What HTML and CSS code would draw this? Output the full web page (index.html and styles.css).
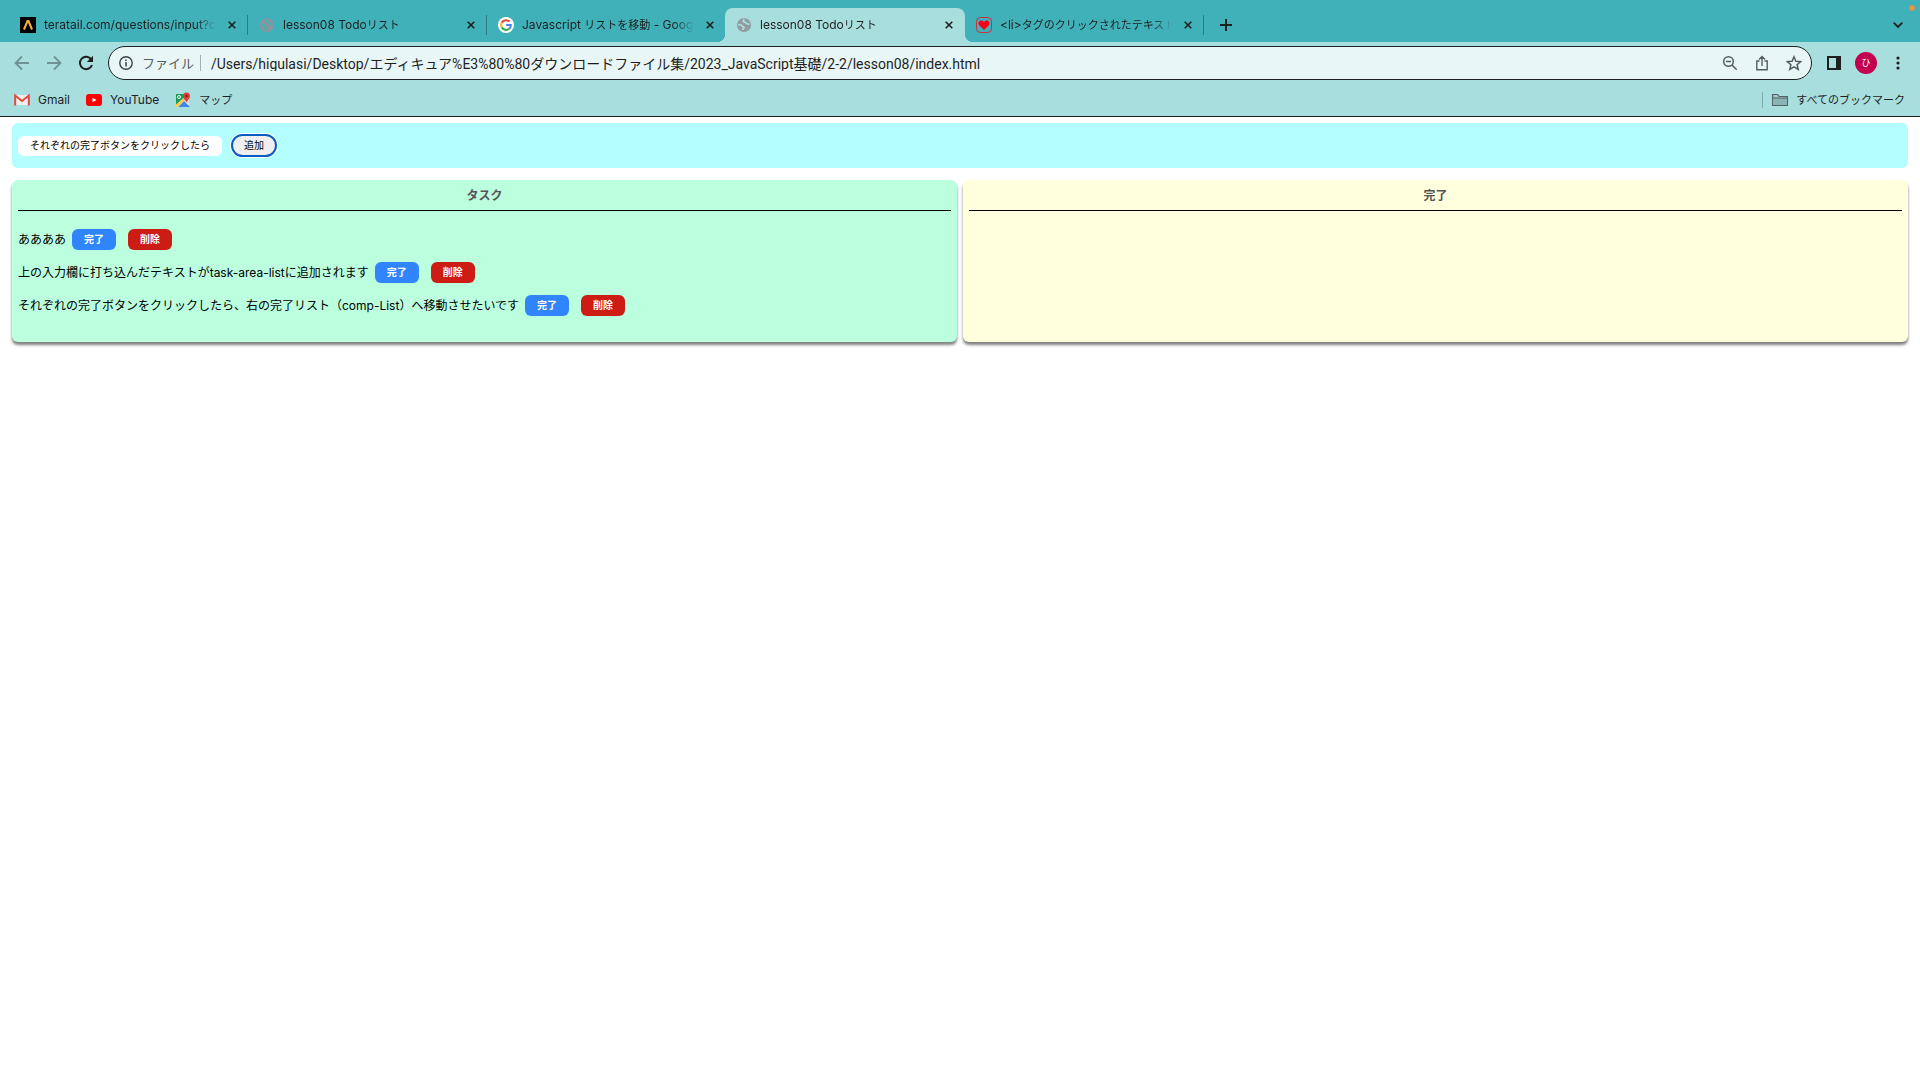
FILE: index.html
```html
<!DOCTYPE html>
<html lang="ja">
  <head>
    <meta charset="UTF-8" />
    <meta name="viewport" content="width=device-width, initial-scale=1.0" />
    <title>lesson08 Todoリスト</title>
    <link rel="stylesheet" href="styles.css">
  </head>
  <body>
    <header class="browser">
      <div class="tab-strip">
        <div class="tab">
          <svg class="favicon" viewBox="0 0 16 16"><rect width="16" height="16" fill="#000"/><path d="M4 12.500L7.500 4h1L12 12.500" fill="none" stroke="#f9b233" stroke-width="2"/></svg>
          <span class="tab-title">teratail.com/questions/input?c</span>
          <button class="close" aria-label="閉じる"><svg viewBox="0 0 8 8"><path d="M.7.7l6.600 6.600M7.300.7L.7 7.300"/></svg></button>
        </div>
        <div class="tab">
          <svg class="favicon" viewBox="0 0 16 16"><circle cx="8" cy="8" r="7" fill="#8b959d"/><path d="M2.200 7.800c1.500-.3 3.300 0 3.800 1s2 .5 2 1.600-1.200 1.200-1.200 2.700M8.500 2.200C7.500 3 6.800 3.600 7.400 4.600s2 .2 2.500 1.200 1.600 1.400 3.600 1.200" fill="none" stroke="#41b1b9" stroke-width="1.800"/></svg>
          <span class="tab-title">lesson08 Todo<span class="kana">リスト</span></span>
          <button class="close" aria-label="閉じる"><svg viewBox="0 0 8 8"><path d="M.7.7l6.600 6.600M7.300.7L.7 7.300"/></svg></button>
        </div>
        <div class="tab no-line">
          <svg class="favicon" viewBox="0 0 16 16"><circle cx="8" cy="8" r="8" fill="#fff"/><g fill="none" stroke-width="2"><path d="M11.500 4.600A4.900 4.900 0 0 0 3.700 5.800" stroke="#ea4335"/><path d="M3.700 5.800a4.900 4.900 0 0 0 0 4.500" stroke="#fbbc05"/><path d="M3.700 10.300a4.900 4.900 0 0 0 7.500 1.400" stroke="#34a853"/><path d="M11.200 11.700A4.800 4.800 0 0 0 12.800 8H8.200" stroke="#4285f4"/></g></svg>
          <span class="tab-title">Javascript <span class="kana">リストを移動</span> - Goog</span>
          <button class="close" aria-label="閉じる"><svg viewBox="0 0 8 8"><path d="M.7.7l6.600 6.600M7.300.7L.7 7.300"/></svg></button>
        </div>
        <div class="tab active">
          <svg class="favicon" viewBox="0 0 16 16"><circle cx="8" cy="8" r="7" fill="#919ba0"/><path d="M2.200 7.800c1.500-.3 3.300 0 3.800 1s2 .5 2 1.600-1.200 1.200-1.200 2.700M8.500 2.200C7.500 3 6.800 3.600 7.400 4.600s2 .2 2.500 1.200 1.600 1.400 3.600 1.200" fill="none" stroke="#a8dedd" stroke-width="1.800"/></svg>
          <span class="tab-title">lesson08 Todo<span class="kana">リスト</span></span>
          <button class="close" aria-label="閉じる"><svg viewBox="0 0 8 8"><path d="M.7.7l6.600 6.600M7.300.7L.7 7.300"/></svg></button>
        </div>
        <div class="tab">
          <svg class="favicon" viewBox="0 0 16 16"><rect x=".5" y=".5" width="15" height="15" rx="4" fill="none" stroke="#d5283b"/><path d="M8 13L3.600 8.700C1.200 6.200 3 3.500 5.200 3.500c1.300 0 2.200.6 2.800 1.600.6-1 1.500-1.600 2.800-1.600 2.200 0 4 2.700 1.600 5.200z" fill="#fb0019"/></svg>
          <span class="tab-title">&lt;li&gt;<span class="kana">タグのクリックされたテキスト</span></span>
          <button class="close" aria-label="閉じる"><svg viewBox="0 0 8 8"><path d="M.7.7l6.600 6.600M7.300.7L.7 7.300"/></svg></button>
        </div>
        <button class="new-tab" aria-label="新しいタブ"><svg width="12" height="12" viewBox="0 0 12 12"><path d="M6 0v12M0 6h12" stroke="#1f1f1f" stroke-width="2"/></svg></button>
        <button class="tab-search" aria-label="タブを検索"><svg width="10" height="6" viewBox="0 0 10 6"><path d="M.7.7L5 5 9.300.7" fill="none" stroke="#1f1f1f" stroke-width="1.800"/></svg></button>
        <span class="rec-dot"></span>
      </div>

      <div class="toolbar">
        <button class="nav" aria-label="戻る"><svg viewBox="0 0 16 16"><path d="M15 8H2M8 1.500L1.500 8 8 14.500" fill="none" stroke="#6f9294" stroke-width="1.800"/></svg></button>
        <button class="nav" aria-label="進む"><svg viewBox="0 0 16 16"><path d="M1 8h13M8 1.500L14.500 8 8 14.500" fill="none" stroke="#6f9294" stroke-width="1.800"/></svg></button>
        <button class="nav" aria-label="再読み込み"><svg viewBox="0 0 16 16"><path d="M13.300 4.500A6.200 6.200 0 1 0 14 10" fill="none" stroke="#1f1f1f" stroke-width="2"/><path d="M15 .8v6.200H8.800z" fill="#1f1f1f"/></svg></button>
        <div class="omnibox">
          <svg class="info" viewBox="0 0 14 14"><circle cx="7" cy="7" r="6.200" fill="none" stroke="#3c4243" stroke-width="1.400"/><path d="M7 6v4.500M7 3.400v1.500" stroke="#3c4243" stroke-width="1.500"/></svg>
          <label class="scheme" for="url">ファイル</label>
          <input class="url" id="url" type="text" value="/Users/higulasi/Desktop/エディキュア%E3%80%80ダウンロードファイル集/2023_JavaScript基礎/2-2/lesson08/index.html">
          <button class="action" aria-label="ズーム"><svg viewBox="0 0 16 16"><g fill="none" stroke="#555d5e" stroke-width="1.500"><circle cx="6.500" cy="6.500" r="4.800"/><path d="M10 10l4.700 4.700M4 6.500h5"/></g></svg></button>
          <button class="action" aria-label="共有"><svg viewBox="0 0 16 16"><path d="M5.500 6H2.800v8.800h10.400V6h-2.700M8 11V2M5 4.500L8 1.500l3 3" fill="none" stroke="#555d5e" stroke-width="1.400"/></svg></button>
          <button class="action" aria-label="ブックマーク"><svg viewBox="0 0 16 16"><path d="M8 1.800l1.900 4.400 4.800.4-3.600 3.100 1.100 4.700L8 11.900l-4.200 2.500 1.100-4.700-3.600-3.100 4.800-.4z" fill="none" stroke="#555d5e" stroke-width="1.500"/></svg></button>
        </div>
        <button class="side-panel" aria-label="サイドパネル"><svg width="14" height="14" viewBox="0 0 14 14"><path d="M1 1h12v12H1z" fill="none" stroke="#1f1f1f" stroke-width="2"/><path d="M9 0h5v14H9z" fill="#1f1f1f"/></svg></button>
        <button class="avatar">ひ</button>
        <button class="more" aria-label="メニュー"><svg width="4" height="14" viewBox="0 0 4 14"><g fill="#1f1f1f"><circle cx="2" cy="2" r="1.600"/><circle cx="2" cy="7" r="1.600"/><circle cx="2" cy="12" r="1.600"/></g></svg></button>
      </div>

      <nav class="bookmarks">
        <a href="#"><svg viewBox="0 0 16 16"><path d="M2 3h12v10H2z" fill="#f0eeee"/><path d="M1.200 13.500V3.500L8 9l6.800-5.500v10" fill="none" stroke="#dc4a42" stroke-width="2"/></svg>Gmail</a>
        <a href="#"><svg viewBox="0 0 16 16"><rect y="2" width="16" height="12" rx="3" fill="#f00"/><path d="M6.500 5.700v4.600l4-2.300z" fill="#fff"/></svg>YouTube</a>
        <a href="#"><svg viewBox="0 0 16 16"><path d="M1 2h13v13H1z" fill="#dfe5e6"/><path d="M1 2h9v5L1 15z" fill="#1c9c5b"/><path d="M3 15l6-6 6 6z" fill="#3d86f5"/><path d="M1 15v-2.500L9.500 5l1.500 1.800L3 15z" fill="#fbd04b"/><circle cx="4" cy="5" r="1.500" fill="none" stroke="#fff"/><path d="M11.500 10.500C10.500 8 8 6.500 8 4a3.500 3.500 0 0 1 7 0c0 2.500-2.500 4-3.500 6.500z" fill="#df3d38"/><circle cx="11.500" cy="4" r="1.200" fill="#8b1d18"/></svg><span class="kana">マップ</span></a>
        <a href="#" class="all-bookmarks"><svg viewBox="0 0 16 16"><path d="M.6 13.500v-11h5l1.500 2h8.300v9z" fill="#a8c6c6" stroke="#4f6465" stroke-width="1.200"/><path d="M1.200 6h13.600v7H1.200z" fill="#8bb3b4"/><path d="M.6 6h14.800" stroke="#4f6465"/></svg><span class="kana">すべてのブックマーク</span></a>
      </nav>
    </header>

    <main class="container">
      <form class="add-area">
        <input class="task-input" type="text" aria-label="タスク" value="それぞれの完了ボタンをクリックしたら">
        <button class="add-btn" type="button">追加</button>
      </form>

      <div class="areas">
        <section class="area task-area">
          <h2>タスク</h2>
          <ul class="task-area-list">
            <li><span>ああああ</span><button class="comp-btn">完了</button><button class="del-btn">削除</button></li>
            <li><span>上の入力欄に打ち込んだテキストがtask-area-listに追加されます</span><button class="comp-btn">完了</button><button class="del-btn">削除</button></li>
            <li><span>それぞれの完了ボタンをクリックしたら、右の完了リスト（comp-List）へ移動させたいです</span><button class="comp-btn">完了</button><button class="del-btn">削除</button></li>
          </ul>
        </section>
        <section class="area comp-area">
          <h2>完了</h2>
          <ul class="comp-list"></ul>
        </section>
      </div>
    </main>
  </body>
</html>
```

FILE: styles.css
```css
* {
  box-sizing: border-box;
}
body {
  margin: 0;
  background: #fff;
  font-family: Inter, "Noto Sans CJK JP", sans-serif;
  font-size: 12px;
  color: #000;
}
button {
  border: none;
  padding: 0;
  background: none;
  font-family: inherit;
  cursor: pointer;
}
svg {
  display: block;
  flex-shrink: 0;
}

/* browser */
.browser {
  background: #a8dedd;
  border-bottom: 1px solid #1f1f1f;
  color: #1f1f1f;
}
.kana {
  font-size: 11px;
}
.tab-strip {
  position: relative;
  display: flex;
  align-items: flex-end;
  height: 42px;
  padding: 0 17px 0 9px;
  background: #41b1b9;
}
.tab {
  position: relative;
  display: flex;
  align-items: center;
  width: 239px;
  height: 34px;
  padding: 0 12px 0 11px;
}
.tab:not(.active):not(.no-line) {
  background: linear-gradient(#2a7c82, #2a7c82) right 7px / 1px 20px no-repeat;
}
.favicon {
  width: 16px;
  height: 16px;
}
.tab-title {
  flex: 1;
  margin: 0 12px 0 8px;
  line-height: 20px;
  white-space: nowrap;
  overflow: hidden;
  mask-image: linear-gradient(to left, transparent, #000 20px);
}
.close {
  width: 8px;
  height: 8px;
}
.close path {
  fill: none;
  stroke: #1f1f1f;
  stroke-width: 1.6;
}
.tab.active {
  width: 240px;
  margin-left: -1px;
  background: #a8dedd;
  border-radius: 8px 8px 0 0;
}
.active::before,
.active::after {
  content: "";
  position: absolute;
  bottom: 0;
  width: 8px;
  height: 8px;
}
.active::before {
  left: -8px;
  background: radial-gradient(circle at 0 0, #41b1b9 8px, #a8dedd 8px);
}
.active::after {
  right: -8px;
  background: radial-gradient(circle at 100% 0, #41b1b9 8px, #a8dedd 8px);
}
.new-tab {
  display: flex;
  align-items: center;
  height: 34px;
  margin-left: 16px;
}
.tab-search {
  display: flex;
  align-items: center;
  height: 34px;
  margin-left: auto;
}
.rec-dot {
  position: absolute;
  top: 5px;
  right: 5px;
  width: 6px;
  height: 6px;
  border-radius: 50%;
  background: #e0954a;
}

.toolbar {
  display: flex;
  align-items: center;
  padding: 4px 20px 4px 14px;
}
.nav {
  width: 16px;
  margin-right: 16px;
}
.nav svg,
.action svg {
  width: 16px;
  height: 16px;
}
.omnibox {
  flex: 1;
  display: flex;
  align-items: center;
  gap: 16px;
  height: 34px;
  margin-right: 15px;
  margin-left: -2px;
  padding: 0 9px 0 10px;
  border: 1px solid #1f1f1f;
  border-radius: 17px;
  background: #e8f6f6;
}
.info {
  width: 14px;
  height: 14px;
}
.scheme {
  margin-left: -7px;
  padding-right: 6px;
  border-right: 1px solid #a3b3b4;
  font-size: 13px;
  line-height: 16px;
  color: #555d5e;
}
.url {
  flex: 1;
  min-width: 0;
  margin-left: -6px;
  padding: 0;
  border: none;
  outline: none;
  background: none;
  font-family: Roboto, "Noto Sans CJK JP", sans-serif;
  font-size: 14px;
  color: #1f1f1f;
}
.action {
  width: 16px;
}
.avatar {
  width: 22px;
  height: 22px;
  margin: 0 19px 0 14px;
  border-radius: 50%;
  background: #c2004f;
  color: #fff;
  font-size: 9px;
  line-height: 22px;
}

.bookmarks {
  display: flex;
  align-items: center;
  gap: 16px;
  height: 32px;
  padding: 0 15px 0 14px;
}
.bookmarks a {
  display: flex;
  align-items: center;
  gap: 8px;
  line-height: 16px;
  color: #1f1f1f;
  text-decoration: none;
}
.bookmarks svg {
  width: 16px;
  height: 16px;
}
.bookmarks .all-bookmarks {
  margin-left: auto;
  padding-left: 9px;
  border-left: 1px solid #7fa9aa;
}

/* todo page */
.container {
  padding: 6px 12px;
}
.add-area {
  display: flex;
  align-items: flex-start;
  gap: 9px;
  height: 45px;
  padding: 11px 6px;
  border-radius: 6px;
  background: #b3ffff;
}
.task-input {
  width: 204px;
  height: 20px;
  margin-top: 2px;
  padding: 0 12px 3px;
  border: none;
  border-radius: 6px;
  background: #fff;
  font-family: inherit;
  font-size: 10px;
  color: #000;
}
.add-btn {
  width: 46px;
  height: 23px;
  border: 2px solid #0a5cc4;
  border-radius: 12px;
  box-shadow: 0 0 0 1px #fff;
  background: #efefef;
  font-size: 10px;
  line-height: 19px;
  color: #000;
}
.areas {
  display: flex;
  gap: 6px;
  margin-top: 12px;
}
.area {
  flex: 1;
  padding: 6px;
  border-radius: 6px;
  box-shadow: 0 3px 3px rgba(0, 0, 0, 0.5);
}
.task-area {
  background: #bbffdf;
}
.comp-area {
  background: #ffffdd;
}
.area h2 {
  margin: 0;
  padding-bottom: 4px;
  border-bottom: 1px solid #000;
  font-size: 12px;
  line-height: 20px;
  text-align: center;
  color: #555;
}
.area ul {
  margin: 0;
  padding: 12px 0 14px;
  list-style: none;
}
.task-area-list li {
  display: flex;
  align-items: center;
  height: 33px;
}
.task-area-list span {
  padding-bottom: 3px;
}
.comp-btn,
.del-btn {
  width: 44px;
  height: 21px;
  margin: 0 6px;
  border-radius: 6px;
  font-size: 10px;
  font-weight: bold;
  line-height: 21px;
  color: #fff;
}
.comp-btn {
  background: #3185fc;
}
.del-btn {
  background: #cc1c14;
}
```
